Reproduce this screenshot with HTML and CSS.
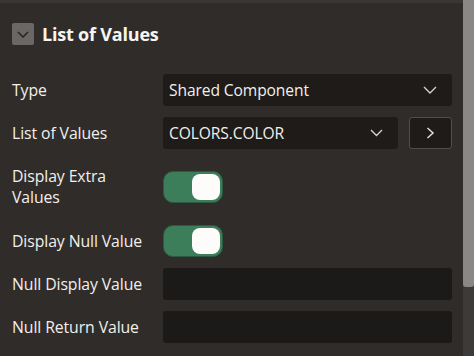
FILE: index.html
```html
<!DOCTYPE html>
<html>
<head>
<meta charset="utf-8">
<link rel="stylesheet" href="styles.css">
</head>
<body>
<div class="frame">
  <div class="panel">
    <div class="header">
      <span class="collapse">
        <svg width="12" height="7" viewBox="0 0 12 7"><path d="M1 1 L6 6 L11 1" fill="none" stroke="#2a2624" stroke-width="1.6"/></svg>
      </span>
      <span class="title">List of Values</span>
    </div>
    <div class="rows">
      <div class="row">
        <div class="label">Type</div>
        <div class="control">
          <div class="select">
            <span class="value">Shared Component</span>
            <svg class="chev" width="14" height="8" viewBox="0 0 14 8"><path d="M1 1 L7 7 L13 1" fill="none" stroke="#d6d1cd" stroke-width="1.4"/></svg>
          </div>
        </div>
      </div>
      <div class="row">
        <div class="label">List of Values</div>
        <div class="control">
          <div class="select">
            <span class="value">COLORS.COLOR</span>
            <svg class="chev" width="13" height="8" viewBox="0 0 13 8"><path d="M1 1 L6.5 6.5 L12 1" fill="none" stroke="#d6d1cd" stroke-width="1.4"/></svg>
          </div>
          <div class="btn">
            <svg width="9" height="12" viewBox="0 0 9 12"><path d="M1.5 1 L7 6 L1.5 11" fill="none" stroke="#e2ddd9" stroke-width="1.5"/></svg>
          </div>
        </div>
      </div>
      <div class="row tall">
        <div class="label">Display Extra<br>Values</div>
        <div class="control">
          <div class="toggle"><span class="knob"></span></div>
        </div>
      </div>
      <div class="row">
        <div class="label">Display Null Value</div>
        <div class="control">
          <div class="toggle"><span class="knob"></span></div>
        </div>
      </div>
      <div class="row">
        <div class="label">Null Display Value</div>
        <div class="control">
          <div class="input"></div>
        </div>
      </div>
      <div class="row">
        <div class="label">Null Return Value</div>
        <div class="control">
          <div class="input"></div>
        </div>
      </div>
    </div>
  </div>
  <div class="scrollbar"><div class="thumb"></div></div>
</div>
</body>
</html>
```
FILE: styles.css
```css
html, body {
  margin: 0;
  padding: 0;
  background: #302c29;
  height: 356px;
  overflow: hidden;
}
body {
  font-family: "Open Sans", "Lato", sans-serif;
  color: #f2efec;
}
.frame {
  display: flex;
  height: 356px;
  border-top: 3px solid #3a3633;
  box-sizing: border-box;
}
.panel {
  flex: 1;
  padding: 20px 11px 0 12px;
}
.scrollbar {
  width: 11px;
  background: #3d3a37;
  display: flex;
  flex-direction: column;
  margin-top: -3px;
}
.thumb {
  height: 287px;
  background: #8a8784;
  border-radius: 0 0 3px 3px;
}
.header {
  display: flex;
  align-items: center;
  height: 22px;
  gap: 8px;
  margin-bottom: 29px;
}
.collapse {
  width: 22px;
  height: 22px;
  background: #6b6764;
  border-radius: 2px;
  display: flex;
  align-items: center;
  justify-content: center;
}
.title {
  font-size: 18px;
  font-weight: 700;
  color: #f7f5f3;
  letter-spacing: -0.2px;
}
.rows {
  display: flex;
  flex-direction: column;
  gap: 11px;
}
.row {
  display: flex;
  align-items: center;
  min-height: 32px;
}
.row.tall {
  padding: 6px 0 6px;
}
.label {
  width: 151px;
  font-size: 15.8px;
  line-height: 21px;
  letter-spacing: -0.1px;
  color: #f2efec;
}
.control {
  flex: 1;
  display: flex;
  gap: 11px;
}
.select {
  flex: 1;
  height: 32px;
  background: #1e1b19;
  border-radius: 3px;
  display: flex;
  align-items: center;
  justify-content: space-between;
  padding: 0 15px 0 6px;
  box-sizing: border-box;
  font-size: 15.6px;
  letter-spacing: -0.1px;
}
.btn {
  width: 43px;
  height: 32px;
  box-sizing: border-box;
  border: 1px solid #524e4b;
  border-radius: 3px;
  background: #1e1b19;
  display: flex;
  align-items: center;
  justify-content: center;
}
.toggle {
  width: 60px;
  height: 32px;
  box-sizing: border-box;
  border: 1px solid #2c5a41;
  background: #3c7d5a;
  border-radius: 10px;
  display: flex;
  align-items: center;
  justify-content: flex-end;
  padding-right: 2px;
}
.knob {
  width: 28px;
  height: 26px;
  background: #fdfcfb;
  border-radius: 8px;
}
.input {
  flex: 1;
  height: 32px;
  background: #1c1a18;
  border-radius: 3px;
}
```
